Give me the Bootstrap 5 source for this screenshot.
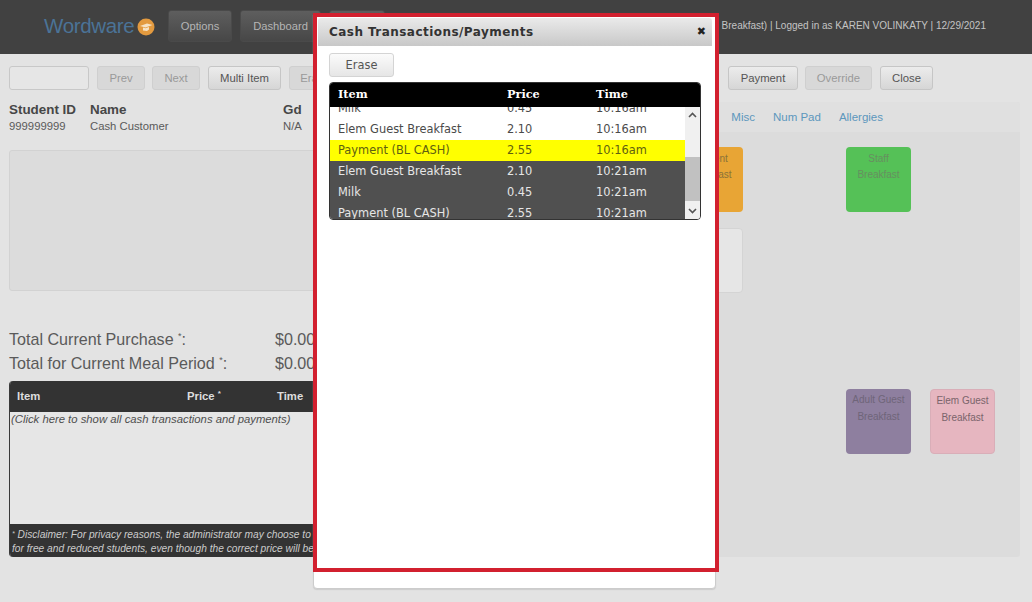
<!DOCTYPE html>
<html lang="en">
<head>
<meta charset="utf-8">
<title>Wordware</title>
<link rel="stylesheet" href="https://cdn.jsdelivr.net/npm/bootstrap@5.3.0/dist/css/bootstrap.min.css">
<style>
html,body{height:602px;overflow:hidden;}
body{background:#e3e3e3;font-family:"Liberation Sans",Arial,sans-serif;font-size:11.3px;color:#4e4e4e;position:relative;}
.topbar{height:54px;background:#414141;padding:10px 46px 0 44px;}
.wlogo{font-size:20.5px;line-height:32px;color:#4b7397;letter-spacing:-.35px;width:124px;}
.wlogo svg{margin-left:3px;margin-top:1px;}
.hbtn{height:32px;padding:0;font-size:11.2px;color:#b5b5b5;background:linear-gradient(#5e5e5e,#474747);border:1px solid #4a4a4a;border-radius:3px;}
.hstatus{font-size:10px;line-height:32px;color:#c4c4c4;white-space:nowrap;}
.tools{padding:12px 99px 0 9px;height:48px;}
.tbtn{height:24px;padding:0;font-size:11.3px;line-height:22px;color:#555;background:linear-gradient(#ececec,#d6d6d6);border:1px solid #c6c6c6;border-radius:3px;}
.tbtn.off,.tbtn.off:disabled{background:#d8d8d8;color:#9a9a9a;border:1px solid #cfcfcf;opacity:1;}
.scan{width:80px;height:24px;background:#e6e6e6;border:1px solid #c8c8c8;border-radius:3px;}
.mainarea{height:455px;}
.leftcol{width:321px;padding-left:9px;flex:none;}
.sid{width:81px;}.sname{width:193px;}
.lbl{font-size:13.4px;font-weight:700;line-height:16px;color:#474747;}
.val{font-size:11.3px;line-height:16px;color:#5a5a5a;}
.photo{height:141px;background:#dcdcdc;border:1px solid #d2d2d2;border-radius:3px;margin-top:16px;margin-bottom:36px;}
.tot{font-size:16.1px;line-height:24px;color:#5a5a5a;}
.tot sup{font-size:9px;top:-.7em;}
.tlabel{width:266px;}
.ledger{height:176px;margin-top:6px;border-radius:4px;overflow:hidden;background:#e6e6e6;border:1px solid #3a3a3a;border-width:0 1px;width:340px;}
.lhead{height:31px;background:#333;color:#ddd;font-weight:700;font-size:11.3px;line-height:31px;padding-left:7px;}
.lhead sup{font-size:8px;}
.lbody{height:112px;padding:0 1px;font-style:italic;line-height:14px;color:#4e4e4e;}
.lfoot{height:33px;background:#333;color:#ccc;font-style:italic;font-size:10.2px;line-height:13.5px;padding:4px 2px 0;white-space:nowrap;overflow:hidden;}
.lfoot sup{font-size:7px;top:-.3em;}
.c1{width:170px;}.c2{width:90px;}
.prices{background:#dcdcdc;border-radius:3px;overflow:hidden;margin-right:12px;}
.tabstrip{height:30px;background:#e0e0e0;padding-right:137px;gap:18px;line-height:30px;}
.tabstrip a{color:#5c97bd;text-decoration:none;font-size:11.5px;}
.tilegrid{display:grid;grid-template-columns:repeat(8,65px);column-gap:19px;grid-auto-rows:65px;row-gap:15.67px;padding:15px 0 0 21px;}
.tile{border-radius:4px;text-align:center;font-size:10px;line-height:16.5px;padding-top:3.5px;}
.t-o{background:#e8a535;color:#8b7339;grid-column:5;grid-row:1;}
.t-g{background:#55c157;color:#678f60;grid-column:7;grid-row:1;}
.t-w{background:#e6e6e6;border:1px solid #d4d4d4;grid-column:5;grid-row:2;}
.t-p{background:#8e7f9f;color:#6f6579;grid-column:7;grid-row:4;}
.t-k{background:#e6b6c0;border:1px solid #d9aeb8;color:#7a646b;grid-column:8;grid-row:4;}
.dlg{position:absolute;left:313px;top:14px;width:403px;height:575px;background:#fff;border:1px solid #ccc;border-radius:0 0 4px 4px;padding:3px 3px 0 4px;box-shadow:0 1px 1px #ccc;}
.redbox{position:absolute;left:313px;top:13px;width:406px;height:559px;border:4px solid #d2202f;pointer-events:none;}
.dtitle{height:28px;background:linear-gradient(#eaeaea,#c8c8c8);border-radius:3px 3px 0 0;padding:0 6px 0 11px;font-family:"DejaVu Sans",sans-serif;font-weight:700;font-size:12px;letter-spacing:.45px;line-height:28px;color:#333;}
.dclose{font-size:11px;line-height:27px;letter-spacing:0;color:#222;}
.dbody{padding:7px 0 0 11px;}
.erase{width:65px;height:24px;padding:1px 0 0;font-family:"DejaVu Sans",sans-serif;font-size:11.4px;color:#555;background:linear-gradient(#fbfbfb,#e6e6e6);border:1px solid #d4d4d4;border-radius:3px;}
.txwrap{width:372px;height:138px;margin-top:5px;border:1px solid #333;border-radius:4px;overflow:hidden;background:#fff;}
.txhead{height:24px;background:#000;color:#fff;font-family:"DejaVu Serif",serif;font-weight:700;font-size:11.3px;line-height:23px;padding-left:8px;flex:none;}
.txmain{height:112px;}
.txrows{width:356px;overflow:hidden;font-family:"DejaVu Sans",sans-serif;font-size:11.4px;}
.txr{height:21px;line-height:21px;padding-left:8px;color:#4a4a4a;white-space:nowrap;}
.txr.first{margin-top:-9px;}
.txr.yel{background:#ff0;color:#5f5f10;}
.txr.drk{background:#505050;color:#e6e6e6;}
.xa{width:169px;}.xb{width:89px;}
.sbar{width:15px;background:#f0f0f0;flex:none;}
.sarrow{height:17px;}
.sthumb{margin-top:33px;height:44px;background:#c1c1c1;}
.sspace{flex:1;}
</style>
</head>
<body>
<header class="topbar d-flex align-items-start">
  <div class="wlogo d-flex align-items-center">Wordware<svg width="18" height="18" viewBox="0 0 18 18"><circle cx="9" cy="9" r="8.5" fill="#e39a3f"/><path d="M3 8l7-2.5 5.5 1.5-7 2.5z" fill="#f6e3c6"/><path d="M6 9.5v3l4 .5 2-1.5v-2.5l-3.5 1.2z" fill="#f6e3c6"/></svg></div>
  <div class="d-flex gap-2">
    <button class="btn hbtn" style="width:64px" type="button">Options</button>
    <button class="btn hbtn" style="width:81px" type="button">Dashboard</button>
    <button class="btn hbtn" style="width:56px" type="button">&nbsp;</button>
  </div>
  <div class="hstatus ms-auto">Breakfast) | Logged in as KAREN VOLINKATY | 12/29/2021</div>
</header>

<div class="tools d-flex">
  <div class="scan"></div>
  <button class="btn tbtn off" style="width:48px;margin-left:8px" disabled type="button">Prev</button>
  <button class="btn tbtn off" style="width:48px;margin-left:7px" disabled type="button">Next</button>
  <button class="btn tbtn" style="width:73px;margin-left:8px" type="button">Multi Item</button>
  <button class="btn tbtn off" style="width:52px;margin-left:8px" disabled type="button">Erase</button>
  <div class="ms-auto d-flex">
    <button class="btn tbtn" style="width:70px" type="button">Payment</button>
    <button class="btn tbtn off" style="width:67px;margin-left:7px" disabled type="button">Override</button>
    <button class="btn tbtn" style="width:53px;margin-left:8px" type="button">Close</button>
  </div>
</div>

<main class="mainarea d-flex">
  <section class="leftcol">
    <div class="d-flex">
      <div class="sid"><div class="lbl">Student ID</div><div class="val">999999999</div></div>
      <div class="sname"><div class="lbl">Name</div><div class="val">Cash Customer</div></div>
      <div><div class="lbl">Gd</div><div class="val">N/A</div></div>
    </div>
    <div class="photo"></div>
    <div class="tot d-flex"><div class="tlabel">Total Current Purchase <sup>*</sup>:</div><div>$0.00</div></div>
    <div class="tot d-flex"><div class="tlabel">Total for Current Meal Period <sup>*</sup>:</div><div>$0.00</div></div>
    <div class="ledger">
      <div class="lhead d-flex"><div class="c1">Item</div><div class="c2">Price <sup>*</sup></div><div>Time</div></div>
      <div class="lbody">(Click here to show all cash transactions and payments)</div>
      <div class="lfoot"><sup>*</sup> Disclaimer: For privacy reasons, the administrator may choose to<br>for free and reduced students, even though the correct price will be</div>
    </div>
  </section>
  <section class="prices flex-grow-1">
    <nav class="tabstrip d-flex justify-content-end"><a href="#">Misc</a><a href="#">Num Pad</a><a href="#">Allergies</a></nav>
    <div class="tilegrid">
      <div class="tile t-o">Student<br>Breakfast</div>
      <div class="tile t-g">Staff<br>Breakfast</div>
      <div class="tile t-w"></div>
      <div class="tile t-p">Adult Guest<br>Breakfast</div>
      <div class="tile t-k">Elem Guest<br>Breakfast</div>
    </div>
  </section>
</main>

<div class="dlg">
  <div class="dtitle d-flex justify-content-between"><span>Cash Transactions/Payments</span><span class="dclose">&#10006;</span></div>
  <div class="dbody">
    <button class="btn erase" type="button">Erase</button>
    <div class="txwrap d-flex flex-column">
      <div class="txhead d-flex"><div class="xa">Item</div><div class="xb">Price</div><div>Time</div></div>
      <div class="txmain d-flex">
        <div class="txrows">
          <div class="txr first d-flex"><div class="xa">Milk</div><div class="xb">0.45</div><div>10:16am</div></div>
          <div class="txr d-flex"><div class="xa">Elem Guest Breakfast</div><div class="xb">2.10</div><div>10:16am</div></div>
          <div class="txr yel d-flex"><div class="xa">Payment (BL CASH)</div><div class="xb">2.55</div><div>10:16am</div></div>
          <div class="txr drk d-flex"><div class="xa">Elem Guest Breakfast</div><div class="xb">2.10</div><div>10:21am</div></div>
          <div class="txr drk d-flex"><div class="xa">Milk</div><div class="xb">0.45</div><div>10:21am</div></div>
          <div class="txr drk d-flex"><div class="xa">Payment (BL CASH)</div><div class="xb">2.55</div><div>10:21am</div></div>
        </div>
        <div class="sbar d-flex flex-column">
          <svg class="sarrow" viewBox="0 0 15 17"><path d="M4 10l3.5-3.5L11 10" fill="none" stroke="#555" stroke-width="1.6"/></svg>
          <div class="sthumb"></div>
          <div class="sspace"></div>
          <svg class="sarrow" viewBox="0 0 15 17"><path d="M4 7l3.5 3.5L11 7" fill="none" stroke="#555" stroke-width="1.6"/></svg>
        </div>
      </div>
    </div>
  </div>
</div>
<div class="redbox"></div>

<script src="https://cdn.jsdelivr.net/npm/bootstrap@5.3.0/dist/js/bootstrap.bundle.min.js"></script>
</body>
</html>
